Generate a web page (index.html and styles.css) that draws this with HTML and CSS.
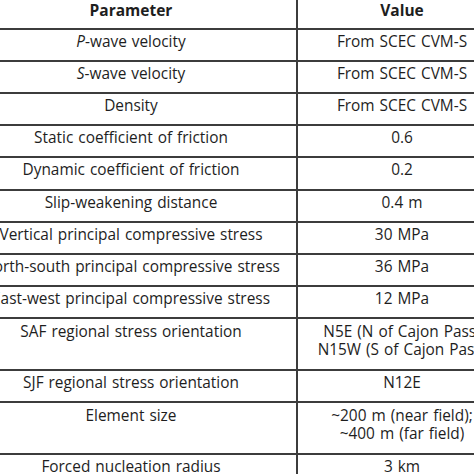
FILE: index.html
```html
<!DOCTYPE html>
<html>
<head>
<meta charset="utf-8">
<link rel="stylesheet" href="styles.css">
</head>
<body>
<div class="frame">
<table class="params">
<colgroup><col class="c1"><col class="c2"></colgroup>
<thead>
<tr><th>Parameter</th><th>Value</th></tr>
</thead>
<tbody>
<tr><td><i>P</i>-wave velocity</td><td>From SCEC CVM-S</td></tr>
<tr><td><i>S</i>-wave velocity</td><td>From SCEC CVM-S</td></tr>
<tr><td>Density</td><td>From SCEC CVM-S</td></tr>
<tr><td>Static coefficient of friction</td><td>0.6</td></tr>
<tr><td>Dynamic coefficient of friction</td><td>0.2</td></tr>
<tr><td>Slip-weakening distance</td><td>0.4 m</td></tr>
<tr><td>Vertical principal compressive stress</td><td>30 MPa</td></tr>
<tr><td>North-south principal compressive stress</td><td>36 MPa</td></tr>
<tr><td>East-west principal compressive stress</td><td>12 MPa</td></tr>
<tr class="tall"><td>SAF regional stress orientation</td><td>N5E (N of Cajon Pass)<br>N15W (S of Cajon Pass)</td></tr>
<tr><td>SJF regional stress orientation</td><td>N12E</td></tr>
<tr class="tall"><td>Element size</td><td>~200 m (near field);<br>~400 m (far field)</td></tr>
<tr><td>Forced nucleation radius</td><td>3 km</td></tr>
</tbody>
</table>
</div>
</body>
</html>
```

FILE: styles.css
```css
html, body {
  margin: 0;
  padding: 0;
  background: #ffffff;
}
.frame {
  width: 474px;
  height: 474px;
  overflow: hidden;
}
.params {
  border-collapse: collapse;
  table-layout: fixed;
  width: 540px;
  margin-left: -34px;
  margin-top: -2.5px;
  font-family: "Open Sans", sans-serif;
  font-size: 15.4px;
  word-spacing: 1px;
  color: #1e1e1e;
  white-space: nowrap;
}
.params .c1 { width: 331px; }
.params .c2 { width: 209px; }
.params th, .params td {
  text-align: center;
  vertical-align: top;
  padding: 2px 0 0 0;
  height: 28.2px;
  line-height: 20px;
  border-bottom: 2px solid #3c3c3c;
}
.params th {
  font-weight: bold;
  font-size: 15.5px;
}
.params th:first-child, .params td:first-child {
  border-right: 2px solid #3c3c3c;
}
.params tr.tall td {
  height: 45.5px;
  padding-top: 4px;
  line-height: 18px;
}
```
